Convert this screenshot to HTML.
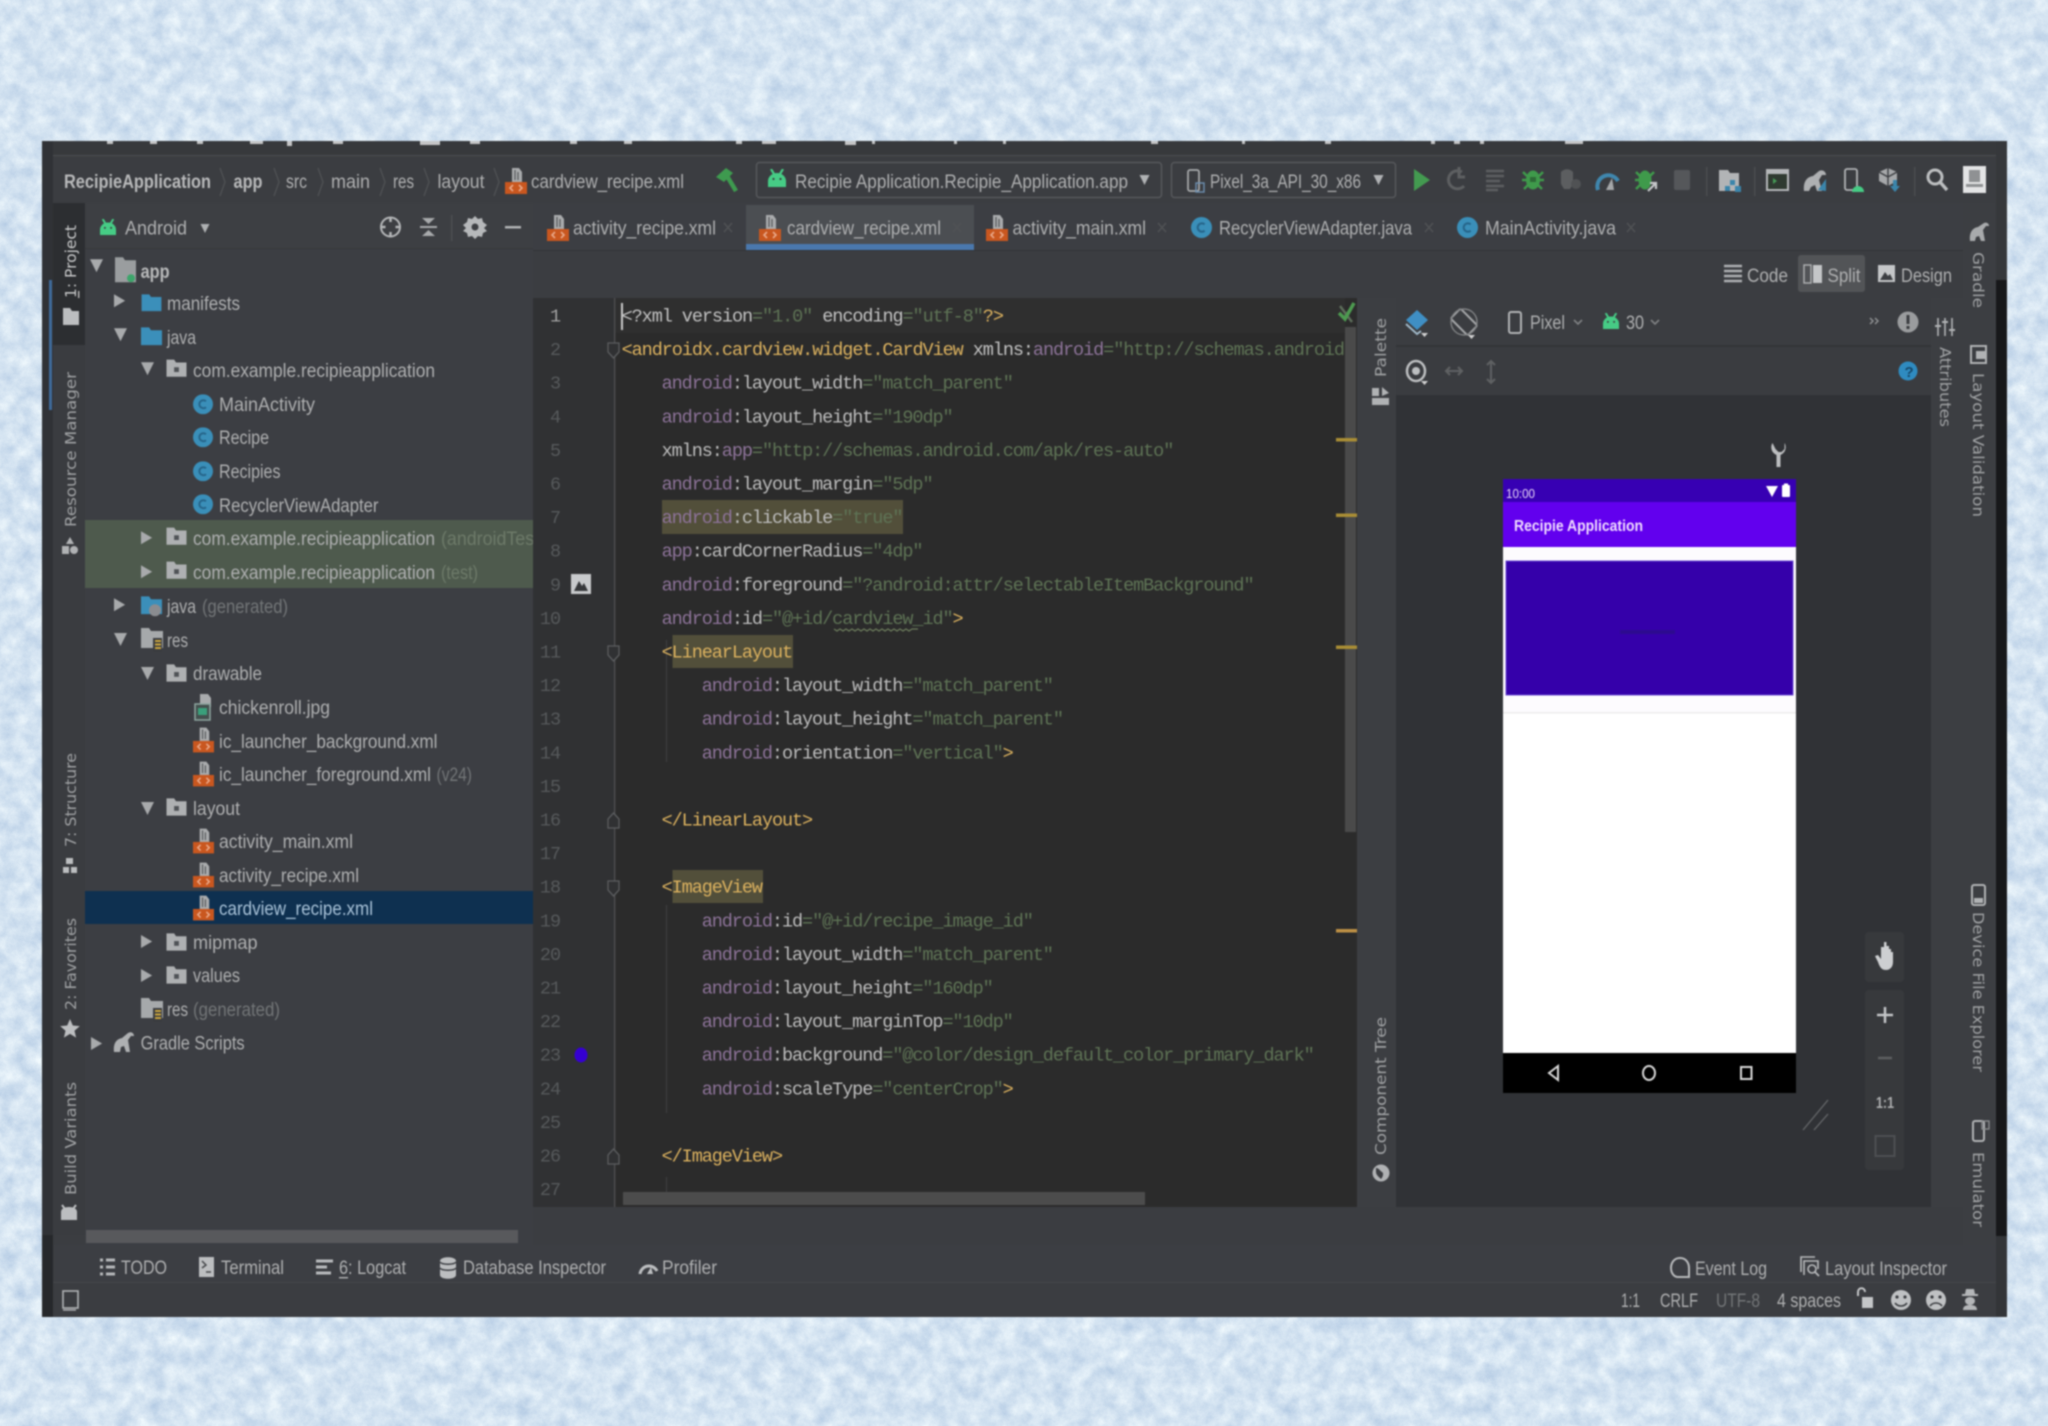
<!DOCTYPE html>
<html><head><meta charset="utf-8"><title>Android Studio</title>
<style>
html,body{margin:0;padding:0;background:#d6e4f2}
svg{display:block}
text{font-family:"Liberation Sans",sans-serif;font-size:19.5px;fill:#aeafb0}
.b{font-weight:bold;fill:#b8b9ba}
.d{fill:#727577}
.gd{fill:#6d7a69}
.v{font-family:"DejaVu Sans",sans-serif;font-size:15px;fill:#9fa1a3}
.m text,text.m{font-family:"Liberation Mono",monospace;font-size:18.5px;letter-spacing:-1.07px;fill:#bdbdbd}
.m .t{fill:#dcb25f}.m .n{fill:#8d7399}.m .s{fill:#5e7355}.m .w{fill:#c2c2c2}
.ln text{font-family:"Liberation Mono",monospace;font-size:18.5px;letter-spacing:-1.07px;fill:#56595b;text-anchor:end}
</style></head>
<body>
<svg xmlns="http://www.w3.org/2000/svg" width="2048" height="1426" viewBox="0 0 2048 1426">
<defs>
<filter id="tex" x="0" y="0" width="100%" height="100%" color-interpolation-filters="sRGB">
<feTurbulence type="fractalNoise" baseFrequency="0.06" numOctaves="5" seed="7"/>
<feColorMatrix values="0.26 0 0 0 0.70  0.20 0 0 0 0.79  0.11 0 0 0 0.89  0 0 0 0 1"/>
</filter>
<clipPath id="cl"><rect x="533" y="298" width="812" height="908"/></clipPath>
<clipPath id="pc"><rect x="85" y="250" width="448" height="980"/></clipPath>
<symbol id="xf" viewBox="0 0 22 26"><path d="M7 0h7l3 4v11H7z" fill="#a9abad"/><path d="M10 2v10M13 4v8" stroke="#55585a" stroke-width="1.2"/><rect x="0" y="14" width="22" height="12" fill="#c9571f"/><path d="M8 17l-3 3 3 3M14 17l3 3-3 3" stroke="#e9a98a" stroke-width="1.6" fill="none"/></symbol>
<symbol id="cl-i" viewBox="0 0 20 20"><circle cx="10" cy="10" r="10" fill="#3a8fb9"/><path d="M13 7a4 4 0 1 0 0 6" stroke="#26658a" stroke-width="2" fill="none"/></symbol>
<symbol id="fg" viewBox="0 0 21 18"><path d="M0 0h8l2 3h11v15H0z" fill="#aeb0b2"/><rect x="8" y="8" width="5" height="5" fill="#4f5256"/></symbol>
<symbol id="fb" viewBox="0 0 21 18"><path d="M0 0h8l2 3h11v15H0z" fill="#3b8fba"/></symbol>
<symbol id="fr" viewBox="0 0 22 24"><path d="M0 0h8l2 3h12v17H0z" fill="#a6a9ab"/><rect x="12" y="10" width="9" height="14" fill="#3a3c40"/><path d="M14 13h6M14 16.500h6M14 20h6" stroke="#c9a43c" stroke-width="2"/></symbol>
<symbol id="and" viewBox="0 0 20 18"><path d="M1 18v-6a9 8 0 0 1 18 0v6z"/><path d="M4 0l3 5M16 0l-3 5" stroke-width="2.200" stroke="currentColor"/><circle cx="6.500" cy="10" r="1.100" fill="#3b3d41"/><circle cx="13.500" cy="10" r="1.100" fill="#3b3d41"/></symbol>
<symbol id="dn" viewBox="0 0 14 14"><path d="M0 0h14L7 14z"/></symbol>
<symbol id="rt" viewBox="0 0 14 14"><path d="M0 0v14l12-7z"/></symbol>
</defs>

<rect width="2048" height="1426" fill="#d6e4f2"/>
<rect width="2048" height="1426" filter="url(#tex)"/>

<g style="filter:blur(.7px)">
<!-- window -->
<rect x="42" y="141" width="1965" height="1176" fill="#3b3d41"/>
<rect x="42" y="141" width="11" height="1176" fill="#303236"/>
<rect x="42" y="1235" width="11" height="82" fill="#26282b"/>
<rect x="49" y="280" width="3" height="130" fill="#3f6a9a"/>
<rect x="1996" y="141" width="11" height="139" fill="#36383b"/>
<rect x="1996" y="280" width="11" height="956" fill="#17181a"/>
<rect x="1996" y="1236" width="11" height="81" fill="#333538"/>
<rect x="53" y="155" width="1943" height="1.500" fill="#4c4e51"/>
<rect x="53" y="141" width="1943" height="14" fill="#37393c"/>
<g fill="#c4c5c6">
<rect x="107" y="141" width="6" height="3"/><rect x="150" y="141" width="7" height="3"/><rect x="197" y="141" width="6" height="3"/><rect x="250" y="141" width="13" height="3"/><rect x="287" y="141" width="5" height="5"/><rect x="333" y="141" width="10" height="3"/><rect x="420" y="141" width="20" height="4"/><rect x="470" y="141" width="10" height="3"/><rect x="570" y="141" width="7" height="3"/><rect x="624" y="141" width="8" height="3"/><rect x="736" y="141" width="6" height="3"/><rect x="762" y="141" width="14" height="3"/><rect x="845" y="141" width="11" height="4"/><rect x="872" y="141" width="3" height="3"/><rect x="954" y="141" width="3" height="3"/><rect x="1003" y="141" width="3" height="3"/><rect x="1151" y="141" width="7" height="3"/><rect x="1242" y="141" width="3" height="3"/><rect x="1325" y="141" width="6" height="3"/><rect x="1431" y="141" width="4" height="3"/><rect x="1454" y="141" width="6" height="3"/><rect x="1480" y="141" width="4" height="3"/><rect x="1565" y="141" width="18" height="3"/>
</g>

<!-- breadcrumb row -->
<rect x="53" y="156" width="1943" height="47" fill="#3b3d41"/>
<g transform="translate(0,-1)">
<text class="b" x="64" y="189" textLength="147" lengthAdjust="spacingAndGlyphs">RecipieApplication</text>
<text class="b" x="233.500" y="189" textLength="29" lengthAdjust="spacingAndGlyphs">app</text>
<text x="286" y="189" textLength="21" lengthAdjust="spacingAndGlyphs">src</text>
<text x="331" y="189" textLength="39" lengthAdjust="spacingAndGlyphs">main</text>
<text x="393" y="189" textLength="21" lengthAdjust="spacingAndGlyphs">res</text>
<text x="437.500" y="189" textLength="47" lengthAdjust="spacingAndGlyphs">layout</text>
<text x="531" y="189" textLength="153" lengthAdjust="spacingAndGlyphs">cardview_recipe.xml</text>
<text x="795" y="189" textLength="333" lengthAdjust="spacingAndGlyphs">Recipie Application.Recipie_Application.app</text>
<text x="1210" y="189" textLength="151" lengthAdjust="spacingAndGlyphs">Pixel_3a_API_30_x86</text>
</g>
<g stroke="#4f5154" stroke-width="1.300" fill="none"><path d="M220 168l5 14-5 14M274 168l5 14-5 14M318 168l5 14-5 14M380 168l5 14-5 14M424 168l5 14-5 14M494 168l5 14-5 14"/></g>
<use href="#xf" x="505" y="168" width="22" height="26"/>
<!-- hammer -->
<path d="M716 177l10-9 7 5-9 9z" fill="#3e9a4f"/><path d="M727 176l9 15" stroke="#3e9a4f" stroke-width="4.500"/>
<!-- run config -->
<rect x="756.500" y="162.500" width="405" height="35" rx="3" fill="none" stroke="#56585b" stroke-width="1.500"/>
<use href="#and" x="767" y="169" width="20" height="18" fill="#46cc85" color="#46cc85"/>
<use href="#dn" x="1138" y="175" width="13" height="10" fill="#b0b2b4"/>
<rect x="1171.500" y="162.500" width="224" height="35" rx="3" fill="none" stroke="#56585b" stroke-width="1.500"/>
<rect x="1188" y="170" width="11" height="21" rx="2" fill="none" stroke="#a8aaac" stroke-width="1.700"/><rect x="1196" y="183" width="8" height="9" fill="none" stroke="#6d8fb0" stroke-width="1.400"/>
<use href="#dn" x="1372" y="175" width="13" height="10" fill="#b0b2b4"/>
<!-- toolbar icons -->
<path d="M1414 169l16 11-16 11z" fill="#439a50"/>
<path d="M1462 172a9 9 0 1 0 2 14M1459 167v10h6" fill="none" stroke="#5d5f61" stroke-width="3"/>
<path d="M1486 171h18M1486 176h18M1486 181h14M1486 186h18M1486 190h12" stroke="#5d5f61" stroke-width="2.500"/>
<ellipse cx="1533" cy="180" rx="7" ry="9.500" fill="#3f9a4b"/><path d="M1523 172l4 4M1543 172l-4 4M1522 180h6M1544 180h-6M1524 189l4-4M1542 189l-4-4" stroke="#3f9a4b" stroke-width="2.500"/><rect x="1530" y="177" width="6" height="5" fill="#2e6a37"/>
<path d="M1561 172a8 8 0 0 1 12 0v12l-3 5h-6l-3-5z" fill="#5c5e60"/><circle cx="1576" cy="184" r="5" fill="#505254"/>
<path d="M1598 190a11 11 0 0 1 20-9" fill="none" stroke="#3f86ad" stroke-width="4"/><path d="M1606 190l6-12 2 12z" fill="#a5a7a9"/>
<ellipse cx="1645" cy="180" rx="6.500" ry="9.500" fill="#3f9a4b"/><path d="M1636 172l4 4M1654 172l-4 4M1635 180h6M1636 189l4-4" stroke="#3f9a4b" stroke-width="2.500"/><path d="M1648 191l8-8M1650 183h6v6" stroke="#c5c7c9" stroke-width="2.200" fill="none"/>
<rect x="1674" y="170" width="16" height="20" rx="2" fill="#55575a"/>
<rect x="1706" y="167" width="1.500" height="29" fill="#4a4c4f"/>
<path d="M1719 170h9l2 3h9v18h-20z" fill="#b2b4b6"/><path d="M1730 180h5v5h-5zM1725 186h5v5h-5zM1735 186h6v6h-6z" fill="#3b85ab"/>
<rect x="1754" y="167" width="1.500" height="29" fill="#4a4c4f"/>
<rect x="1767" y="170" width="21" height="20" fill="#2f3a30" stroke="#b5b7b9" stroke-width="2"/><rect x="1767" y="170" width="21" height="4" fill="#b5b7b9"/><path d="M1773 178l4 3-4 3z" fill="#469a55"/>
<path d="M1804 191c-1-8 2-14 9-15l6-5c4-2 7 1 7 4h-4l-3 5 3 11h-5l-2-6-4 2-2 4z" fill="#aeb0b2"/><path d="M1818 190l8-11v12z" fill="#3b85ab"/>
<rect x="1845" y="169" width="12" height="21" rx="2" fill="none" stroke="#b0b2b4" stroke-width="1.800"/><path d="M1852 192a6 6 0 0 1 12 0z" fill="#46cc85"/>
<path d="M1879 172l9-4 9 4v9l-9 5-9-5z" fill="#a6a8aa"/><path d="M1888 168v18M1879 172l9 5 9-5" stroke="#3b3d41" stroke-width="1.400" fill="none"/><path d="M1893 180h4v6h3l-5 6-5-6h3z" fill="#3b85ab"/>
<rect x="1914" y="167" width="1.500" height="29" fill="#4a4c4f"/>
<circle cx="1935" cy="177" r="7" fill="none" stroke="#bcbec0" stroke-width="3"/><path d="M1940 182l7 8" stroke="#bcbec0" stroke-width="3.400"/>
<rect x="1963" y="166" width="23" height="27" fill="#e3e4e5"/><rect x="1969" y="170" width="11" height="12" fill="#8f9193"/><rect x="1966" y="184" width="17" height="3" fill="#8f9193"/>

<!-- left tool strip -->
<rect x="53" y="203" width="32" height="1032" fill="#3a3c40"/>
<rect x="53" y="203" width="32" height="142" fill="#2c2e31"/>
<!-- project panel -->
<rect x="85" y="203" width="448" height="1042" fill="#3c3e43"/>
<rect x="85" y="203" width="448" height="45" fill="#3d3f43"/>
<rect x="85" y="248" width="448" height="1" fill="#36383b"/>
<use href="#and" x="99" y="219" width="18" height="16" fill="#46cc85" color="#46cc85"/>
<text x="125" y="234.500" textLength="62" lengthAdjust="spacingAndGlyphs">Android</text>
<use href="#dn" x="199" y="224" width="12" height="9" fill="#aeb0b2"/>
<circle cx="390.500" cy="227" r="9.500" fill="none" stroke="#b4b6b8" stroke-width="2"/><path d="M390.500 217v5M390.500 232v5M380.500 227h5M395.500 227h5" stroke="#b4b6b8" stroke-width="2.500"/>
<path d="M422 218h13l-6.500 6zM422 236h13l-6.500-6z" fill="#a8aaac"/><rect x="420" y="226" width="17" height="2" fill="#a8aaac"/>
<rect x="451" y="215" width="1.500" height="26" fill="#4c4e51"/>
<path d="M475 216l3 3 4-1 1 4 4 3-3 3 3 3-4 2-1 4-4-1-3 3-3-3-4 1-1-4-4-2 3-3-3-3 4-3 1-4 4 1z" fill="#b6b8ba"/><circle cx="475" cy="227" r="3.500" fill="#3d3f43"/>
<rect x="505" y="226" width="16" height="2.500" fill="#b0b2b4"/>

<!-- tree -->
<rect x="85" y="520" width="448" height="68" fill="#4e5a4d"/>
<rect x="85" y="891" width="448" height="33" fill="#0e3050"/>
<g clip-path="url(#pc)">
<g transform="translate(0,-.8)">
<use href="#dn" x="90" y="259" width="13" height="15" fill="#a8aaac"/>
<path d="M115 258h8l2 3h11v22h-21z" fill="#9a9d9f"/><circle cx="131" cy="279" r="4" fill="#3da56b"/>
<text class="b" x="140.600" y="279" textLength="29" lengthAdjust="spacingAndGlyphs">app</text>

<use href="#rt" x="114" y="294" width="13" height="15" fill="#a8aaac"/>
<use href="#fb" x="141" y="295" width="21" height="17"/>
<text x="167" y="311" textLength="73" lengthAdjust="spacingAndGlyphs">manifests</text>

<use href="#dn" x="114" y="328" width="13" height="15" fill="#a8aaac"/>
<use href="#fb" x="141" y="328" width="21" height="18"/>
<text x="167" y="345" textLength="29" lengthAdjust="spacingAndGlyphs">java</text>

<use href="#dn" x="141" y="362" width="13" height="15" fill="#a8aaac"/>
<use href="#fg" x="166.500" y="360" width="20" height="18"/>
<text x="193" y="378" textLength="242" lengthAdjust="spacingAndGlyphs">com.example.recipieapplication</text>

<use href="#cl-i" x="193" y="395" width="20" height="20"/>
<text x="219" y="412" textLength="96" lengthAdjust="spacingAndGlyphs">MainActivity</text>
<use href="#cl-i" x="193" y="428" width="20" height="20"/>
<text x="219" y="445" textLength="50" lengthAdjust="spacingAndGlyphs">Recipe</text>
<use href="#cl-i" x="193" y="462" width="20" height="20"/>
<text x="219" y="479" textLength="61.500" lengthAdjust="spacingAndGlyphs">Recipies</text>
<use href="#cl-i" x="193" y="495" width="20" height="20"/>
<text x="219" y="513" textLength="159.500" lengthAdjust="spacingAndGlyphs">RecyclerViewAdapter</text>

<use href="#rt" x="141" y="531" width="13" height="15" fill="#a8aaac"/>
<use href="#fg" x="166.500" y="528" width="20" height="18"/>
<text x="193" y="546" textLength="242" lengthAdjust="spacingAndGlyphs">com.example.recipieapplication</text>
<text class="gd" x="441" y="546" textLength="104" lengthAdjust="spacingAndGlyphs">(androidTest)</text>
<use href="#rt" x="141" y="565" width="13" height="15" fill="#a8aaac"/>
<use href="#fg" x="166.500" y="562" width="20" height="18"/>
<text x="193" y="580" textLength="242" lengthAdjust="spacingAndGlyphs">com.example.recipieapplication</text>
<text class="gd" x="441" y="580" textLength="37" lengthAdjust="spacingAndGlyphs">(test)</text>

<use href="#rt" x="114" y="598" width="13" height="15" fill="#a8aaac"/>
<use href="#fb" x="141" y="597" width="21" height="18"/><circle cx="155" cy="611" r="6" fill="#8a8c90"/>
<text x="167" y="614" textLength="29" lengthAdjust="spacingAndGlyphs">java</text>
<text class="d" x="202" y="614" textLength="86" lengthAdjust="spacingAndGlyphs">(generated)</text>
</g>

<use href="#dn" x="114" y="632" width="13" height="15" fill="#a8aaac"/>
<use href="#fr" x="141" y="628" width="22" height="24"/>
<text x="167" y="647" textLength="21" lengthAdjust="spacingAndGlyphs">res</text>

<use href="#dn" x="141" y="666" width="13" height="15" fill="#a8aaac"/>
<use href="#fg" x="166.500" y="664" width="20" height="18"/>
<text x="193" y="680" textLength="69" lengthAdjust="spacingAndGlyphs">drawable</text>

<path d="M200 694h8l3 4v9h-11z" fill="#a9abad"/><rect x="195" y="704" width="15" height="16" fill="#44504e" stroke="#8ea5a0" stroke-width="1.500"/><rect x="198" y="708" width="9" height="7" fill="#3aa07b"/>
<text x="219" y="714" textLength="111" lengthAdjust="spacingAndGlyphs">chickenroll.jpg</text>

<use href="#xf" x="193" y="727" width="21" height="26"/>
<text x="219" y="748" textLength="218.500" lengthAdjust="spacingAndGlyphs">ic_launcher_background.xml</text>
<use href="#xf" x="193" y="761" width="21" height="26"/>
<text x="219" y="781" textLength="212" lengthAdjust="spacingAndGlyphs">ic_launcher_foreground.xml</text>
<text class="d" x="436.500" y="781" textLength="35.500" lengthAdjust="spacingAndGlyphs">(v24)</text>

<use href="#dn" x="141" y="801" width="13" height="15" fill="#a8aaac"/>
<use href="#fg" x="166.500" y="798" width="20" height="18"/>
<text x="193" y="815" textLength="47" lengthAdjust="spacingAndGlyphs">layout</text>

<use href="#xf" x="193" y="828" width="21" height="26"/>
<text x="219" y="848" textLength="134" lengthAdjust="spacingAndGlyphs">activity_main.xml</text>
<use href="#xf" x="193" y="862" width="21" height="26"/>
<text x="219" y="882" textLength="140" lengthAdjust="spacingAndGlyphs">activity_recipe.xml</text>
<use href="#xf" x="193" y="895" width="21" height="26"/>
<text style="fill:#a8c2d8" x="219" y="915" textLength="154" lengthAdjust="spacingAndGlyphs">cardview_recipe.xml</text>

<use href="#rt" x="141" y="934" width="13" height="15" fill="#a8aaac"/>
<use href="#fg" x="166.500" y="933" width="20" height="18"/>
<text x="193" y="949" textLength="64.600" lengthAdjust="spacingAndGlyphs">mipmap</text>
<use href="#rt" x="141" y="968" width="13" height="15" fill="#a8aaac"/>
<use href="#fg" x="166.500" y="966" width="20" height="18"/>
<text x="193" y="982" textLength="47" lengthAdjust="spacingAndGlyphs">values</text>

<use href="#fr" x="141" y="998" width="22" height="24"/>
<text x="167" y="1016" textLength="21" lengthAdjust="spacingAndGlyphs">res</text>
<text class="d" x="193" y="1016" textLength="87" lengthAdjust="spacingAndGlyphs">(generated)</text>

<use href="#rt" x="91" y="1036" width="13" height="15" fill="#a8aaac"/>
<path d="M114 1052c-1-8 2-13 8-14l6-5c3-2 6 0 6 3h-3l-3 4 2 12h-4l-2-6-3 1-1 5z" fill="#aeb0b2"/>
<text x="140.600" y="1049.500" textLength="104" lengthAdjust="spacingAndGlyphs">Gradle Scripts</text>
</g>
<rect x="86" y="1230" width="432" height="13" fill="#58595c"/>

<!-- vertical left -->
<text class="v" style="fill:#c8c9ca" transform="translate(76,298) rotate(-90)" textLength="73" lengthAdjust="spacingAndGlyphs">1: Project</text>
<path d="M63 308h7l2 3h7v14H63z" fill="#bcbec0"/>
<rect x="78" y="291" width="1.400" height="7" fill="#bbb"/>
<text class="v" transform="translate(76,527) rotate(-90)" textLength="155" lengthAdjust="spacingAndGlyphs">Resource Manager</text>
<path d="M70 537l4 7h-8z" fill="#b0b2b4"/><rect x="62" y="546" width="7" height="8" fill="#b0b2b4"/><circle cx="74" cy="550" r="4" fill="#b0b2b4"/>
<text class="v" transform="translate(76,847) rotate(-90)" textLength="94" lengthAdjust="spacingAndGlyphs">7: Structure</text>
<rect x="66" y="858" width="7" height="6" fill="#bcbec0"/><rect x="63" y="867" width="6" height="6" fill="#bcbec0"/><rect x="71" y="867" width="6" height="6" fill="#bcbec0"/>
<text class="v" transform="translate(76,1010) rotate(-90)" textLength="92" lengthAdjust="spacingAndGlyphs">2: Favorites</text>
<path d="M70 1019l2.800 6.500 7 .6-5.300 4.600 1.600 6.900-6.100-3.700-6.100 3.700 1.600-6.900-5.300-4.600 7-.6z" fill="#bcbec0"/>
<text class="v" transform="translate(76,1195) rotate(-90)" textLength="113" lengthAdjust="spacingAndGlyphs">Build Variants</text>
<path d="M61 1220v-8c0-3 3-5 8-5s8 2 8 5v8z" fill="#bcbec0"/><path d="M62 1205l3 4M76 1205l-3 4" stroke="#bcbec0" stroke-width="2"/>

<!-- tab bar -->
<rect x="533" y="203" width="1430" height="47" fill="#3c3e43"/>
<rect x="746" y="205" width="228" height="45" fill="#4b4e52"/>
<rect x="746" y="244" width="228" height="6" fill="#4a78ad"/>
<rect x="533" y="250" width="1430" height="48" fill="#3b3d41"/>
<rect x="533" y="250" width="1430" height="1" fill="#323437"/>
<use href="#xf" x="547" y="215" width="22" height="26"/>
<text x="573" y="234.500" textLength="143" lengthAdjust="spacingAndGlyphs">activity_recipe.xml</text>
<use href="#xf" x="759" y="215" width="22" height="26"/>
<text x="787" y="234.500" textLength="154" lengthAdjust="spacingAndGlyphs">cardview_recipe.xml</text>
<use href="#xf" x="986" y="215" width="22" height="26"/>
<text x="1012.500" y="234.500" textLength="133.500" lengthAdjust="spacingAndGlyphs">activity_main.xml</text>
<use href="#cl-i" x="1191" y="217" width="21" height="21"/>
<text x="1219" y="234.500" textLength="193" lengthAdjust="spacingAndGlyphs">RecyclerViewAdapter.java</text>
<use href="#cl-i" x="1457" y="217" width="21" height="21"/>
<text x="1485" y="234.500" textLength="131" lengthAdjust="spacingAndGlyphs">MainActivity.java</text>
<g stroke="#505255" stroke-width="1.500"><path d="M724 223l8 9M732 223l-8 9M953 223l8 9M961 223l-8 9M1158 223l8 9M1166 223l-8 9M1425 223l8 9M1433 223l-8 9M1627 223l8 9M1635 223l-8 9"/></g>

<!-- Code/Split/Design -->
<path d="M1724 266h18M1724 271h18M1724 276h18M1724 281h18" stroke="#aeb0b2" stroke-width="2.500"/>
<text x="1747" y="282" textLength="41" lengthAdjust="spacingAndGlyphs">Code</text>
<rect x="1798" y="255" width="67" height="37" rx="3" fill="#525457"/>
<rect x="1804" y="265" width="7" height="18" fill="none" stroke="#b0b2b4" stroke-width="1.400"/><rect x="1813" y="265" width="9" height="18" fill="#c4c6c8"/>
<text x="1827.500" y="282" textLength="33" lengthAdjust="spacingAndGlyphs">Split</text>
<rect x="1878" y="265" width="17" height="17" fill="#c4c6c8"/><path d="M1880 280l5-8 3 4 2-2 3 6z" fill="#3b3d41"/>
<text x="1901" y="282" textLength="51" lengthAdjust="spacingAndGlyphs">Design</text>

<!-- editor -->
<rect x="533" y="298" width="824" height="909" fill="#2b2b2b"/>
<rect x="533" y="298" width="81" height="909" fill="#303133"/>
<rect x="614" y="298" width="731" height="35" fill="#2f2f2f"/>
<rect x="614" y="298" width="1.300" height="909" fill="#4f5052"/>
<rect x="666" y="640" width="1" height="122" fill="#3f4042"/>
<rect x="666" y="905" width="1" height="208" fill="#3f4042"/>
<rect x="666" y="1177" width="1" height="15" fill="#3f4042"/>
<rect x="662" y="500" width="241" height="34" fill="#524f3a"/>
<rect x="672.500" y="635" width="120.500" height="33" fill="#524f3a"/>
<rect x="672.500" y="870" width="90.500" height="33" fill="#524f3a"/>
<!-- scrollbar & marks -->
<rect x="1345" y="327" width="11" height="505" fill="#4a4a4a"/>
<g fill="#a98d35"><rect x="1336" y="438" width="21" height="3.500"/><rect x="1336" y="513.500" width="21" height="3.500"/><rect x="1336" y="645.500" width="21" height="3.500"/></g>
<rect x="1336" y="929" width="21" height="3.500" fill="#bd9045"/>
<path d="M1340 306l12 16M1353 306l-8 10" stroke="#5d6d5a" stroke-width="2.500" fill="none"/>
<path d="M1339 313l6 6 9-16" stroke="#4d9a50" stroke-width="3.500" fill="none"/>
<rect x="623" y="1192" width="522" height="13" fill="#4c4c4c"/>
<rect x="533" y="1207" width="824" height="38" fill="#3b3d41"/>

<g class="ln">
<text x="560" y="321.500" style="fill:#a2a2a2">1</text><text x="560" y="355.100">2</text><text x="560" y="388.700">3</text><text x="560" y="422.300">4</text><text x="560" y="455.900">5</text><text x="560" y="489.500">6</text><text x="560" y="523.100">7</text><text x="560" y="556.700">8</text><text x="560" y="590.300">9</text><text x="560" y="623.900">10</text><text x="560" y="657.500">11</text><text x="560" y="691.100">12</text><text x="560" y="724.700">13</text><text x="560" y="758.300">14</text><text x="560" y="791.900">15</text><text x="560" y="825.500">16</text><text x="560" y="859.100">17</text><text x="560" y="892.700">18</text><text x="560" y="926.300">19</text><text x="560" y="959.900">20</text><text x="560" y="993.500">21</text><text x="560" y="1027.100">22</text><text x="560" y="1060.700">23</text><text x="560" y="1094.300">24</text><text x="560" y="1127.900">25</text><text x="560" y="1161.500">26</text><text x="560" y="1195.100">27</text>
</g>
<rect x="571" y="574" width="20" height="20" fill="#c8cacc"/><path d="M574 591l5-10 3 5 2-3 4 8z" fill="#35373a"/>
<ellipse cx="581" cy="1055" rx="6.500" ry="7.500" fill="#3500d2"/>
<g fill="#303133" stroke="#5b5d5f" stroke-width="1.300">
<path d="M608 343h11v9l-5.500 6-5.500-6z"/><path d="M608 646h11v9l-5.500 6-5.500-6z"/><path d="M608 828v-9l5.500-6 5.500 6v9z"/><path d="M608 881h11v9l-5.500 6-5.500-6z"/><path d="M608 1164v-9l5.500-6 5.500 6v9z"/>
</g>
<rect x="621" y="303" width="2" height="27" fill="#c8c8c8"/>

<g class="m" clip-path="url(#cl)" transform="translate(0,-.5)">
<text x="621.600" y="322" xml:space="preserve"><tspan class="w">&lt;?xml version</tspan><tspan class="s">="1.0"</tspan><tspan class="w"> encoding</tspan><tspan class="s">="utf-8"</tspan><tspan class="t">?&gt;</tspan></text>
<text x="621.600" y="355.600" xml:space="preserve"><tspan class="t">&lt;androidx.cardview.widget.CardView</tspan><tspan class="w"> xmlns:</tspan><tspan class="n">android</tspan><tspan class="s">="http://schemas.android.com/apk/res/android"</tspan></text>
<text x="661.600" y="389.200"><tspan class="n">android</tspan>:layout_width<tspan class="s">="match_parent"</tspan></text>
<text x="661.600" y="422.800"><tspan class="n">android</tspan>:layout_height<tspan class="s">="190dp"</tspan></text>
<text x="661.600" y="456.400">xmlns:<tspan class="n">app</tspan><tspan class="s">="http://schemas.android.com/apk/res-auto"</tspan></text>
<text x="661.600" y="490"><tspan class="n">android</tspan>:layout_margin<tspan class="s">="5dp"</tspan></text>
<text x="661.600" y="523.600"><tspan class="n">android</tspan>:clickable<tspan class="s">="true"</tspan></text>
<text x="661.600" y="557.200"><tspan class="n">app</tspan>:cardCornerRadius<tspan class="s">="4dp"</tspan></text>
<text x="661.600" y="590.800"><tspan class="n">android</tspan>:foreground<tspan class="s">="?android:attr/selectableItemBackground"</tspan></text>
<text x="661.600" y="624.400"><tspan class="n">android</tspan>:id<tspan class="s">="@+id/cardview_id"</tspan><tspan class="t">&gt;</tspan></text>
<text x="661.600" y="658"><tspan class="t">&lt;LinearLayout</tspan></text>
<text x="701.700" y="691.600"><tspan class="n">android</tspan>:layout_width<tspan class="s">="match_parent"</tspan></text>
<text x="701.700" y="725.200"><tspan class="n">android</tspan>:layout_height<tspan class="s">="match_parent"</tspan></text>
<text x="701.700" y="758.800"><tspan class="n">android</tspan>:orientation<tspan class="s">="vertical"</tspan><tspan class="t">&gt;</tspan></text>
<text x="661.600" y="826"><tspan class="t">&lt;/LinearLayout&gt;</tspan></text>
<text x="661.600" y="893.200"><tspan class="t">&lt;ImageView</tspan></text>
<text x="701.700" y="926.800"><tspan class="n">android</tspan>:id<tspan class="s">="@+id/recipe_image_id"</tspan></text>
<text x="701.700" y="960.400"><tspan class="n">android</tspan>:layout_width<tspan class="s">="match_parent"</tspan></text>
<text x="701.700" y="994"><tspan class="n">android</tspan>:layout_height<tspan class="s">="160dp"</tspan></text>
<text x="701.700" y="1027.600"><tspan class="n">android</tspan>:layout_marginTop<tspan class="s">="10dp"</tspan></text>
<text x="701.700" y="1061.200"><tspan class="n">android</tspan>:background<tspan class="s">="@color/design_default_color_primary_dark"</tspan></text>
<text x="701.700" y="1094.800"><tspan class="n">android</tspan>:scaleType<tspan class="s">="centerCrop"</tspan><tspan class="t">&gt;</tspan></text>
<text x="661.600" y="1162"><tspan class="t">&lt;/ImageView&gt;</tspan></text>
</g>
<path d="M834 629l3 2 3-2 3 2 3-2 3 2 3-2 3 2 3-2 3 2 3-2 3 2 3-2 3 2 3-2 3 2 3-2 3 2 3-2 3 2 3-2 3 2 3-2 3 2 3-2 3 2 3-2h6" fill="none" stroke="#6d7d5d" stroke-width="1.200"/>

<!-- palette strip -->
<rect x="1357" y="298" width="39" height="909" fill="#3c3e42"/>
<text class="v" transform="translate(1386,377) rotate(-90)" textLength="59" lengthAdjust="spacingAndGlyphs">Palette</text>
<path d="M1372 388h7v8h-7zM1382 387l7 6-7 3zM1372 398h17v7h-17z" fill="#b0b2b4"/>
<text class="v" transform="translate(1386,1155) rotate(-90)" textLength="138" lengthAdjust="spacingAndGlyphs">Component Tree</text>
<circle cx="1381" cy="1173" r="8.500" fill="#b0b2b4"/><path d="M1376 1168c3 0 4 3 6 4s1 5-1 7c-2-2-5-4-5-7z" fill="#3c3e42"/>

<!-- design panel -->
<rect x="1396" y="298" width="535" height="909" fill="#303236"/>
<rect x="1396" y="298" width="535" height="47" fill="#3b3d41"/>
<rect x="1396" y="345" width="535" height="2" fill="#333538"/>
<rect x="1396" y="347" width="535" height="48" fill="#3a3c40"/>
<path d="M1417 310l11 10-11 10-11-10z" fill="#3f8fc4"/><path d="M1406 324l11 10 4-3" fill="none" stroke="#a0b8c8" stroke-width="2"/><path d="M1421 333h7l-3.500 4z" fill="#d0d0d0"/>
<rect x="1457" y="310" width="14" height="24" rx="2" transform="rotate(-45 1464 322)" fill="none" stroke="#a4a6a8" stroke-width="2"/><circle cx="1464" cy="322" r="13" fill="none" stroke="#808284" stroke-width="1.400"/><path d="M1468 335h7l-3.500 4z" fill="#d0d0d0"/>
<rect x="1509" y="312" width="12" height="21" rx="2" fill="none" stroke="#b0b2b4" stroke-width="2"/>
<text x="1530" y="329" textLength="35" lengthAdjust="spacingAndGlyphs">Pixel</text>
<path d="M1574 320l4 4 4-4M1651 320l4 4 4-4" fill="none" stroke="#808284" stroke-width="1.600"/>
<use href="#and" x="1602" y="313" width="18" height="16" fill="#46cc85" color="#46cc85"/>
<text x="1626" y="329" textLength="18" lengthAdjust="spacingAndGlyphs">30</text>
<path d="M1870 318l3 3-3 3M1875 318l3 3-3 3" fill="none" stroke="#8d8f91" stroke-width="1.500"/>
<circle cx="1908" cy="322" r="10.500" fill="#9a9c9e"/><rect x="1906.500" y="315" width="3" height="9" fill="#3b3d41"/><rect x="1906.500" y="326" width="3" height="3" fill="#3b3d41"/>
<ellipse cx="1416" cy="371" rx="9" ry="10" fill="none" stroke="#bcbec0" stroke-width="2.500"/><circle cx="1416" cy="371" r="4" fill="#bcbec0"/><path d="M1421 381h7l-3.500 4z" fill="#d0d0d0"/>
<path d="M1446 371h16M1450 367l-4 4 4 4M1458 367l4 4-4 4" fill="none" stroke="#5f6163" stroke-width="2"/>
<path d="M1491 361v22M1487 365l4-4 4 4M1487 379l4 4 4-4" fill="none" stroke="#5f6163" stroke-width="2"/>
<circle cx="1908" cy="371" r="9.500" fill="#2f8bc0"/><text x="1904.500" y="377" style="font-size:15px;fill:#15486a;font-weight:bold">?</text>

<!-- attributes strip & right strip -->
<rect x="1931" y="298" width="32" height="909" fill="#3c3e42"/>
<rect x="1963" y="203" width="33" height="1042" fill="#3c3e42"/>
<path d="M1938 318v18M1945 318v18M1952 318v18" stroke="#b0b2b4" stroke-width="1.600"/><path d="M1935 326h6M1942 322h6M1949 330h6" stroke="#b0b2b4" stroke-width="2"/>
<text class="v" transform="translate(1940,347) rotate(90)" textLength="80" lengthAdjust="spacingAndGlyphs">Attributes</text>
<text class="v" transform="translate(1973,252) rotate(90)" textLength="56" lengthAdjust="spacingAndGlyphs">Gradle</text>
<path d="M1970 241c-1-8 2-13 8-14l6-4c2-1 5 0 5 3h-3l-3 4 2 11h-4l-2-5-3 1-1 4z" fill="#a8aaac"/>
<rect x="1971" y="346" width="15" height="17" fill="none" stroke="#b0b2b4" stroke-width="2"/><rect x="1976" y="351" width="9" height="8" fill="#b0b2b4"/>
<text class="v" transform="translate(1973,373) rotate(90)" textLength="144" lengthAdjust="spacingAndGlyphs">Layout Validation</text>
<rect x="1972" y="885" width="13" height="20" rx="2" fill="none" stroke="#b0b2b4" stroke-width="2"/><rect x="1974" y="898" width="9" height="5" fill="#b0b2b4"/>
<text class="v" transform="translate(1973,912) rotate(90)" textLength="160" lengthAdjust="spacingAndGlyphs">Device File Explorer</text>
<rect x="1973" y="1121" width="11" height="20" rx="2" fill="none" stroke="#b0b2b4" stroke-width="2"/><rect x="1982" y="1121" width="7" height="8" fill="none" stroke="#8d8f91" stroke-width="1.300"/>
<text class="v" transform="translate(1973,1152) rotate(90)" textLength="75" lengthAdjust="spacingAndGlyphs">Emulator</text>

<!-- phone -->
<path d="M1773 443c-2 3-2 9 4 12v12h4v-12c6-3 6-9 4-12v6l-3 3h-3l-3-3z" fill="#bcbec0" transform="translate(-.5 0)"/>
<rect x="1503" y="479" width="293" height="614" fill="#fff"/>
<rect x="1503" y="479" width="293" height="23" fill="#3700b3"/>
<rect x="1503" y="502" width="293" height="45" fill="#6200ee"/>
<rect x="1503" y="547" width="293" height="166" fill="#fdfbfe"/>
<rect x="1503" y="712" width="293" height="1.500" fill="#ededed"/>
<rect x="1506" y="561" width="287" height="134" fill="#3500aa" stroke="#6a4cd0" stroke-width="1"/>
<rect x="1620" y="630" width="55" height="4" fill="#2d0a90"/>
<rect x="1503" y="1053" width="293" height="40" fill="#000"/>
<text style="font-size:12.500px;fill:#e8d8f8" x="1506" y="498" textLength="29" lengthAdjust="spacingAndGlyphs">10:00</text>
<text style="font-size:16px;fill:#f0dcff;font-weight:bold" x="1514" y="531" textLength="129" lengthAdjust="spacingAndGlyphs">Recipie Application</text>
<path d="M1766 486h12l-6 11z" fill="#fff"/><rect x="1782" y="485" width="8" height="12" rx="1" fill="#fff"/><rect x="1784" y="483.500" width="4" height="2" fill="#fff"/>
<path d="M1558 1066v14l-9-7z" fill="none" stroke="#d8d8d8" stroke-width="2"/>
<ellipse cx="1649" cy="1073" rx="6" ry="7" fill="none" stroke="#d8d8d8" stroke-width="2"/>
<rect x="1741" y="1067" width="10.500" height="12" fill="none" stroke="#d8d8d8" stroke-width="2"/>
<path d="M1803 1130l25-30M1814 1130l14-16" stroke="#66686a" stroke-width="1.300" fill="none"/>

<!-- zoom controls -->
<rect x="1865" y="932" width="39" height="50" rx="4" fill="#37393c"/>
<rect x="1865" y="990" width="39" height="180" rx="4" fill="#37393c"/>
<path d="M1878 962l-3-6 3-1 3 4v-12h3v-5h2.500v4h2.500v3h2v3h2v10c0 5-3 8-7 8s-6-2-8-8z" fill="#cdcfd1"/>
<path d="M1885 1007v16M1877 1015h16" stroke="#c4c6c8" stroke-width="2.500"/>
<path d="M1878 1058h14" stroke="#5d5f61" stroke-width="2.500"/>
<text x="1876" y="1108" style="font-size:16px;font-weight:bold" textLength="18" lengthAdjust="spacingAndGlyphs">1:1</text>
<rect x="1875.500" y="1136" width="19" height="20" fill="none" stroke="#4d4f52" stroke-width="2"/>

<!-- bottom tool bar -->
<rect x="53" y="1245" width="1910" height="37" fill="#3c3e43"/>
<rect x="1963" y="1245" width="33" height="37" fill="#3c3e43"/>
<rect x="53" y="1282" width="1943" height="35" fill="#3b3d41"/>
<rect x="53" y="1282" width="1943" height="1" fill="#444649"/>
<path d="M100 1260h3M100 1267h3M100 1274h3M106 1260h9M106 1267h9M106 1274h9" stroke="#b4b6b8" stroke-width="3"/>
<text x="121" y="1274" textLength="46" lengthAdjust="spacingAndGlyphs">TODO</text>
<rect x="199" y="1257" width="15" height="20" fill="#bcbec0"/><path d="M202 1261l4 4-4 3M206 1272h5" stroke="#45474a" stroke-width="1.500" fill="none"/>
<text x="221" y="1274" textLength="63" lengthAdjust="spacingAndGlyphs">Terminal</text>
<path d="M316 1261h17M316 1267h11M316 1273h15" stroke="#b8babc" stroke-width="3"/>
<text x="339" y="1274" textLength="67" lengthAdjust="spacingAndGlyphs">6: Logcat</text>
<rect x="339" y="1277" width="9" height="1.400" fill="#b4b5b6"/>
<path d="M440 1261c0-5 16-5 16 0v14c0 5-16 5-16 0z" fill="#bcbec0"/><path d="M440 1262c2 3 14 3 16 0M440 1268c2 3 14 3 16 0" stroke="#3c3e43" stroke-width="1.500" fill="none"/>
<text x="463" y="1274" textLength="143" lengthAdjust="spacingAndGlyphs">Database Inspector</text>
<path d="M640 1274a9 9 0 0 1 17-3" stroke="#bcbec0" stroke-width="3" fill="none"/><path d="M647 1274l4-7 2 7z" fill="#bcbec0"/>
<text x="662" y="1274" textLength="55" lengthAdjust="spacingAndGlyphs">Profiler</text>
<rect x="63" y="1291" width="15" height="17" fill="none" stroke="#b0b2b4" stroke-width="1.600"/><path d="M63 1310h13" stroke="#b0b2b4" stroke-width="1.400"/>
<path d="M1689 1277h-11c-4 0-7-4-7-9s3-10 9-10 9 5 9 10z" fill="none" stroke="#b8babc" stroke-width="2"/>
<text x="1695" y="1275" textLength="72" lengthAdjust="spacingAndGlyphs">Event Log</text>
<path d="M1801 1272v-15h14M1804 1275v-14h14v8" fill="none" stroke="#b8babc" stroke-width="1.600"/><circle cx="1812" cy="1269" r="4" fill="none" stroke="#b8babc" stroke-width="1.600"/><path d="M1815 1272l4 4" stroke="#b8babc" stroke-width="1.800"/>
<text x="1825" y="1275" textLength="122" lengthAdjust="spacingAndGlyphs">Layout Inspector</text>
<text x="1621" y="1307" textLength="19" lengthAdjust="spacingAndGlyphs">1:1</text>
<text x="1660" y="1307" textLength="38" lengthAdjust="spacingAndGlyphs">CRLF</text>
<text class="d" x="1716" y="1307" textLength="44" lengthAdjust="spacingAndGlyphs">UTF-8</text>
<text x="1777" y="1307" textLength="64" lengthAdjust="spacingAndGlyphs">4 spaces</text>
<path d="M1858 1296v-4c0-5 7-5 7 0" fill="none" stroke="#c4c6c8" stroke-width="2"/><rect x="1862" y="1297" width="11" height="11" fill="#c4c6c8"/>
<circle cx="1901" cy="1300" r="10" fill="#bfc1c3"/><circle cx="1897" cy="1297" r="1.600" fill="#3b3d41"/><circle cx="1905" cy="1297" r="1.600" fill="#3b3d41"/><path d="M1895 1303c3 4 9 4 12 0" stroke="#3b3d41" stroke-width="1.600" fill="none"/>
<circle cx="1936" cy="1300" r="10" fill="#bfc1c3"/><circle cx="1932" cy="1297" r="1.600" fill="#3b3d41"/><circle cx="1940" cy="1297" r="1.600" fill="#3b3d41"/><path d="M1930 1306c3-4 9-4 12 0" stroke="#3b3d41" stroke-width="1.600" fill="none"/>
<path d="M1965 1294l1-5h8l1 5h3v2h-16v-2z" fill="#b4b6b8"/><ellipse cx="1970" cy="1301" rx="5" ry="4" fill="#b4b6b8"/><path d="M1963 1310c0-4 3-5 7-5s7 1 7 5z" fill="#b4b6b8"/>
</g>
</svg>
</body></html>
